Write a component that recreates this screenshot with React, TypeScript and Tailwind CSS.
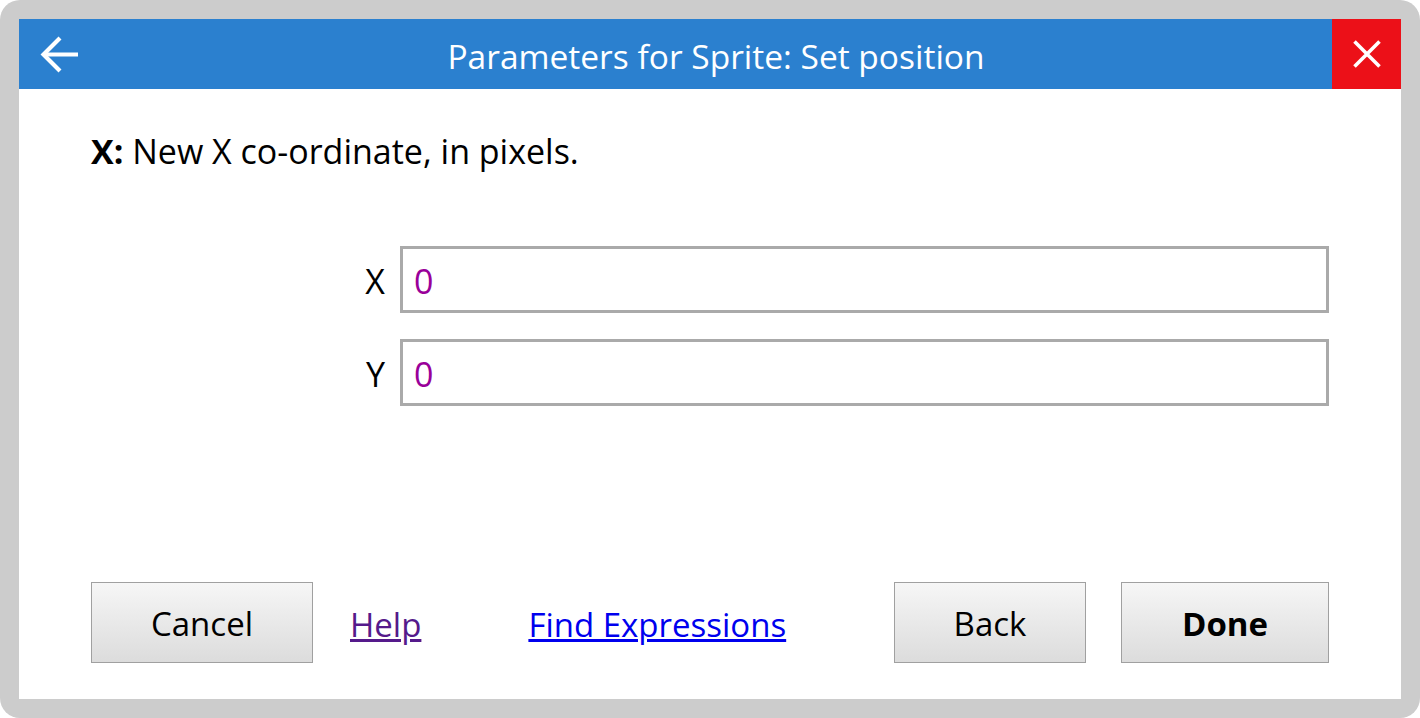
function Field({ label, value }: { label: string; value: string }) {
  return (
    <>
      <div className="flex items-center justify-end text-[34px] text-black pt-[3px]">{label}</div>
      <div className="h-[67px] border-[3px] border-[#aaaaaa] bg-white flex items-center px-[11px] pt-[3px] text-[34px] text-[#990099]">
        {value}
      </div>
    </>
  );
}

function GrayButton({ children, className }: { children: React.ReactNode; className?: string }) {
  return (
    <button
      className={`h-[81px] border border-[#a0a0a0] bg-gradient-to-b from-[#f6f6f6] to-[#dcdcdc] text-[33px] text-black pt-[3px] ${className ?? ''}`}
    >
      {children}
    </button>
  );
}

export default function App() {
  return (
    <div className="w-[1420px] h-[718px] bg-white" style={{ fontFamily: '"Open Sans", "Noto Sans", sans-serif' }}>
      <div className="w-full h-full bg-[#cccccc] rounded-[20px] p-[19px]">
        <div className="w-full h-full bg-white flex flex-col">
          {/* Header */}
          <div className="h-[70px] bg-[#2b80cf] flex items-stretch">
            <div className="w-[80px] flex items-center pl-[21px]">
              <svg width="39" height="39" viewBox="0 0 39 39" fill="none" stroke="white" strokeWidth="4.2">
                <path d="M3 19.5 H38" />
                <path d="M20 3 L3.5 19.5 L20 36" />
              </svg>
            </div>
            <div className="flex-1 flex items-center justify-center text-white text-[33.5px] pt-[4px] pl-[1px]">
              Parameters for Sprite: Set position
            </div>
            <div className="w-[69px] bg-[#ec1018] flex items-center justify-center">
              <svg width="28" height="28" viewBox="0 0 28 28" fill="none" stroke="white" strokeWidth="3.6">
                <path d="M1.5 1.5 L26.5 26.5 M26.5 1.5 L1.5 26.5" />
              </svg>
            </div>
          </div>

          {/* Body */}
          <div className="flex-1 flex flex-col px-[72px]">
            <p className="mt-[40px] text-[34px] text-black leading-[44px]">
              <span className="font-bold">X:</span> New X co-ordinate, in pixels.
            </p>

            <div className="mt-[73px] grid grid-cols-[294px_1fr] gap-x-[15px] gap-y-[26px]">
              <Field label="X" value="0" />
              <Field label="Y" value="0" />
            </div>

            <div className="mt-auto mb-[36px] flex items-center">
              <GrayButton className="w-[222px]">Cancel</GrayButton>
              <a href="#" className="ml-[37px] mt-[5px] text-[33px] text-[#551a8b] underline">Help</a>
              <a href="#" className="ml-[107px] mt-[5px] text-[33px] text-[#0000ee] underline">Find Expressions</a>
              <GrayButton className="ml-auto w-[192px]">Back</GrayButton>
              <GrayButton className="ml-[35px] w-[208px] font-bold">Done</GrayButton>
            </div>
          </div>
        </div>
      </div>
    </div>
  );
}
